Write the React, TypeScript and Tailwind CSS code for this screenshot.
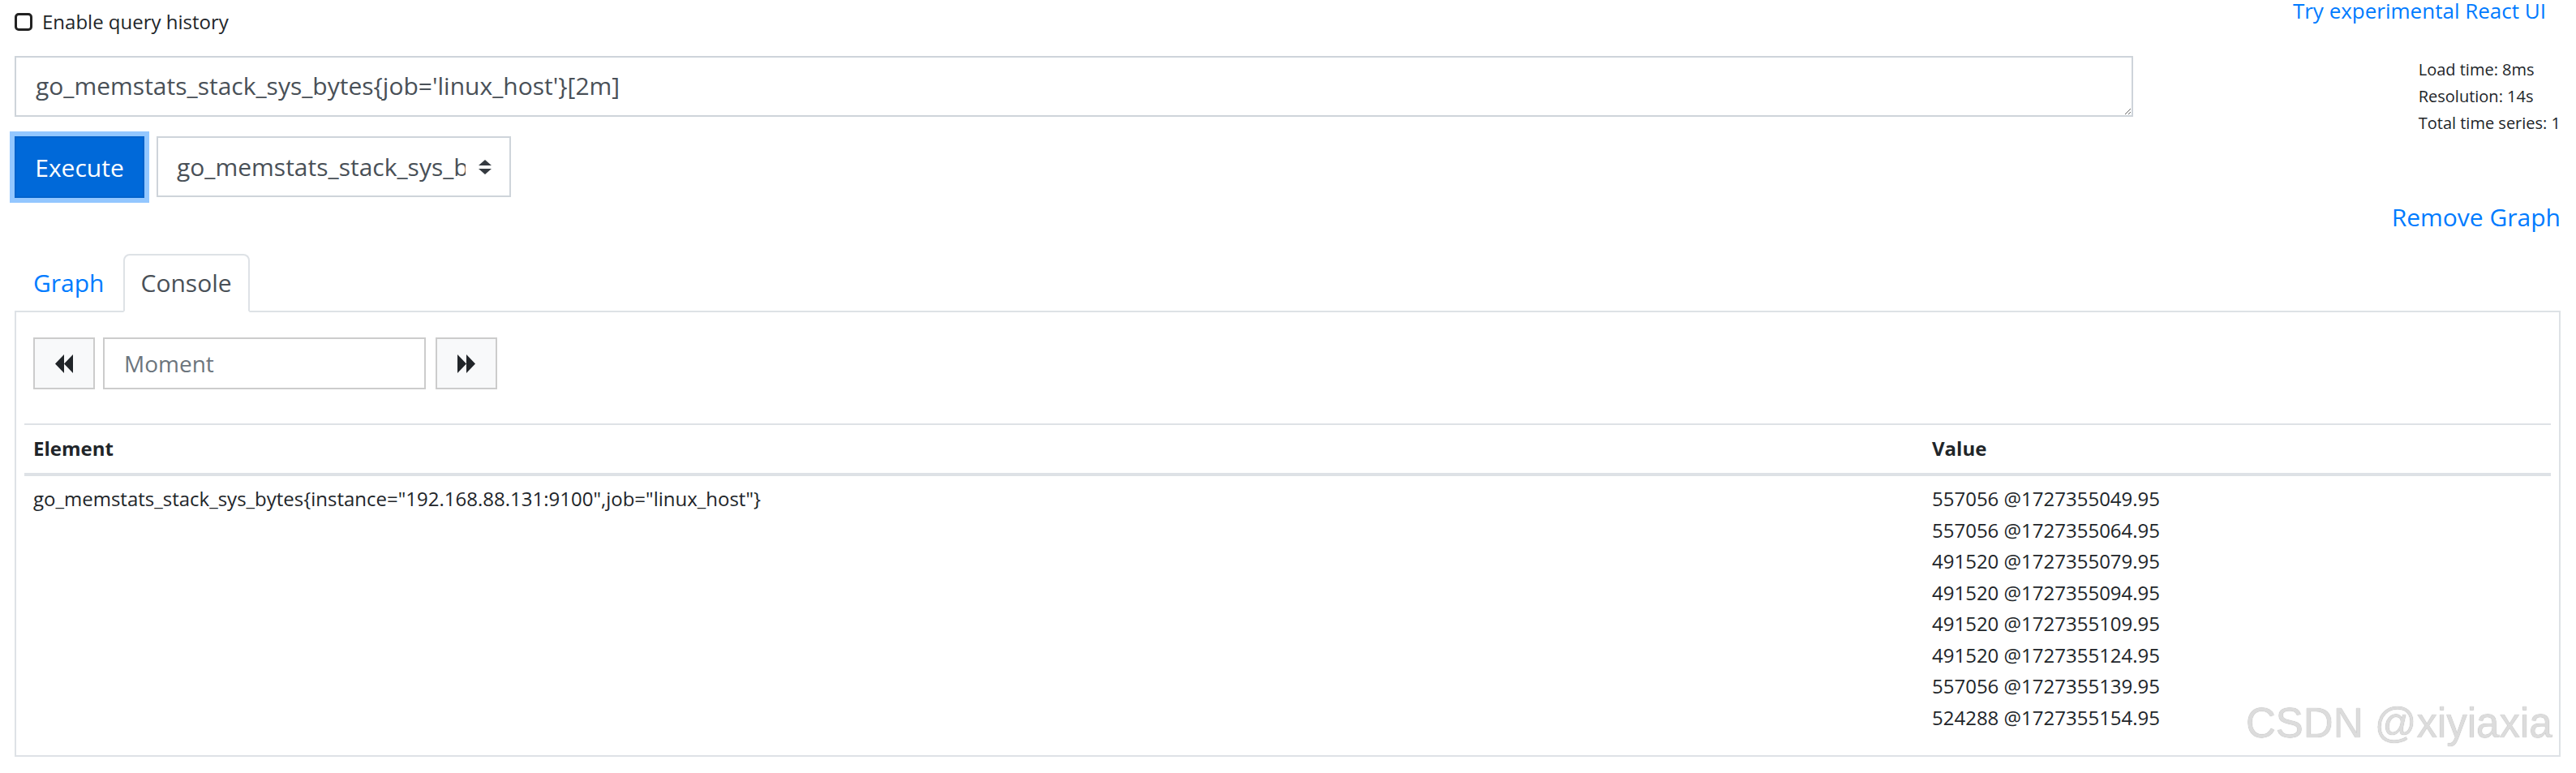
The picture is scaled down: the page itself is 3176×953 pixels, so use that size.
import React from 'react';

const values = [
  '557056 @1727355049.95',
  '557056 @1727355064.95',
  '491520 @1727355079.95',
  '491520 @1727355094.95',
  '491520 @1727355109.95',
  '491520 @1727355124.95',
  '557056 @1727355139.95',
  '524288 @1727355154.95',
];

function StepIcon({ flip }: { flip?: boolean }) {
  return (
    <svg width="22" height="23" viewBox="0 0 22 23" className={flip ? '-scale-x-100' : ''}>
      <path d="M0 11.5 11 0v23zM11 11.5 22 0v23z" fill="#212529" />
    </svg>
  );
}

export default function App() {
  return (
    <div className="relative w-[3176px] h-[953px] overflow-hidden bg-white font-['Open_Sans',sans-serif] text-[#212529]">
      <div className="pl-[18px] pr-[19px]">
        {/* Top row */}
        <div className="flex h-[69px] items-start justify-between">
          <label className="mt-[16px] flex h-[22px] items-center gap-[12px]">
            <span className="h-[22px] w-[22px] rounded-[5px] border-[3px] border-[#222] bg-white" />
            <span className="text-[24px] leading-none">Enable query history</span>
          </label>
          <a className="mr-[18px] text-[26px] leading-none text-[#007bff]">Try experimental React UI</a>
        </div>

        {/* Expression + stats */}
        <div className="flex items-start">
          <textarea
            readOnly
            rows={1}
            value="go_memstats_stack_sys_bytes{job='linux_host'}[2m]"
            className="h-[75px] w-[2612px] overflow-hidden border-2 border-[#ced4da] px-[24px] py-[11px] text-[30px] leading-[48px] text-[#495057] outline-none"
          />
          <div className="ml-auto whitespace-nowrap text-[20px] leading-[33px]">
            <div>Load time: 8ms</div>
            <div>Resolution: 14s</div>
            <div>Total time series: 1</div>
          </div>
        </div>

        {/* Execute + metric select */}
        <div className="flex h-[76px] items-start">
          <button className="h-[76px] w-[160px] border-2 border-[#0062cc] bg-[#0069d9] text-[30px] text-white shadow-[0_0_0_6px_#93c7ff]">
            Execute
          </button>
          <div className="ml-[15px] flex h-[75px] w-[437px] items-center border-2 border-[#ced4da] pl-[23px]">
            <span className="w-[356px] overflow-hidden whitespace-nowrap text-[30px] text-[#495057]">
              go_memstats_stack_sys_bytes
            </span>
            <svg width="16" height="18" viewBox="0 0 16 18" className="ml-[16px]">
              <path d="M0 7 8 0l8 7zM0 11h16l-8 7z" fill="#343a40" />
            </svg>
          </div>
        </div>

        <div className="text-right text-[30px] leading-[48px] text-[#007bff]">Remove Graph</div>

        {/* Tabs */}
        <div className="mt-[21px] flex border-b-2 border-[#dee2e6]">
          <div className="-mb-[2px] border-2 border-transparent px-[21px] py-[10px] text-[30px] leading-[48px] text-[#007bff]">
            Graph
          </div>
          <div className="-mb-[2px] rounded-t-[8px] border-2 border-[#dee2e6] border-b-white bg-white px-[20px] py-[10px] text-[30px] leading-[48px] text-[#495057]">
            Console
          </div>
        </div>

        {/* Tab content */}
        <div className="border-x-2 border-b-2 border-[#dee2e6] px-[10px] pt-[31px] pb-[17px]">
          <div className="flex items-center pl-[11px]">
            <div className="flex h-[64px] w-[76px] items-center justify-center border-2 border-[#ccc] bg-[#f8f9fa]">
              <StepIcon />
            </div>
            <div className="ml-[10px] flex h-[64px] w-[398px] items-center border-2 border-[#ccc] pl-[24px] text-[28px] text-[#6c757d]">
              Moment
            </div>
            <div className="ml-[12px] flex h-[64px] w-[76px] items-center justify-center border-2 border-[#ccc] bg-[#f8f9fa]">
              <StepIcon flip />
            </div>
          </div>

          <table className="mt-[42px] w-full table-fixed border-separate border-spacing-0 text-[24px] leading-[38.5px]">
            <colgroup>
              <col className="w-[2341px]" />
              <col />
            </colgroup>
            <thead>
              <tr>
                <th className="border-t-2 border-b-4 border-[#dee2e6] px-[11px] py-[10px] text-left font-bold">Element</th>
                <th className="border-t-2 border-b-4 border-[#dee2e6] px-[11px] py-[10px] text-left font-bold">Value</th>
              </tr>
            </thead>
            <tbody>
              <tr>
                <td className="px-[11px] py-[9.5px] align-top">
                  go_memstats_stack_sys_bytes{'{'}instance="192.168.88.131:9100",job="linux_host"{'}'}
                </td>
                <td className="px-[11px] py-[9.5px] align-top">
                  {values.map((v) => (
                    <div key={v}>{v}</div>
                  ))}
                </td>
              </tr>
            </tbody>
          </table>
        </div>
      </div>

      {/* Watermark */}
      <div className="absolute left-[2769px] top-[866px] font-['Liberation_Sans',sans-serif] text-[51px] leading-none text-[#dcdcdc] [text-shadow:0_0_1px_#9a9a9a]">
        CSDN @xiyiaxia
      </div>
    </div>
  );
}
